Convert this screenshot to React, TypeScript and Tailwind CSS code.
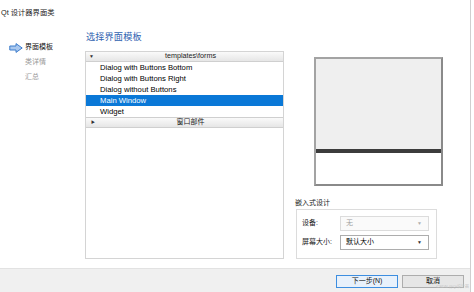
import React from "react";

const FONT = { fontFamily: '"Liberation Sans", "Noto Sans CJK SC", sans-serif' };

function NavArrow() {
  return (
    <svg width="14" height="10" viewBox="0 0 14 10">
      <path d="M0.8 3 H7 V0.6 L13.2 5 L7 9.4 V7 H0.8 Z" fill="#a9c8ef" stroke="#3d7ccc" strokeWidth="1" strokeLinejoin="round" />
    </svg>
  );
}

function Combo({ text, disabled }: { text: string; disabled?: boolean }) {
  return (
    <div
      className={
        "w-[89px] h-[15px] box-border border flex items-center justify-between pl-[5px] pr-[6px] text-[7px] " +
        (disabled ? "border-[#dcdcdc] bg-[#fafafa] text-[#a0a0a0]" : "border-[#adadad] bg-white text-black")
      }
    >
      <span>{text}</span>
      <span className={"text-[5px] " + (disabled ? "text-[#b0b0b0]" : "text-[#333]")}>▼</span>
    </div>
  );
}

export default function App() {
  const items = ["Dialog with Buttons Bottom", "Dialog with Buttons Right", "Dialog without Buttons", "Main Window", "Widget"];
  return (
    <div className="w-[474px] h-[292px] bg-white flex relative overflow-hidden text-black" style={FONT}>
      <div className="w-[471px] h-full flex flex-col border-r border-[#cfcfcf] box-border">
        {/* main area */}
        <div className="flex-1 flex flex-col">
          <div className="h-[28px] flex items-center pl-[1px] text-[7.3px] text-[#222] pb-[1px]">Qt 设计器界面类</div>
          <div className="flex-1 flex">
            {/* nav */}
            <div className="w-[85px] pt-[12px] text-[7px]">
              <div className="h-[15px] flex items-center pl-[9px] gap-[2px]">
                <NavArrow />
                <span className="text-[#111]">界面模板</span>
              </div>
              <div className="h-[15px] flex items-center pl-[25px] text-[#9a9a9a]">类详情</div>
              <div className="h-[15px] flex items-center pl-[25px] text-[#9a9a9a]">汇总</div>
            </div>
            {/* tree column */}
            <div className="w-[199px] flex flex-col pt-[3px]">
              <div className="h-[12px] leading-[12px] text-[9.2px] tracking-[0.1px] text-[#2f62b0] pl-[1px]">选择界面模板</div>
              <div className="mt-[8px] h-[208px] box-border border border-[#d4d4d4] bg-white flex flex-col overflow-hidden">
                <div className="h-[10px] box-border border-b border-[#cfcfcf] bg-gradient-to-b from-[#fafafa] to-[#e6e6e6] relative flex items-center justify-center pl-[12px] text-[7.2px] text-[#222]">
                  <span className="absolute left-[3px] top-[1px] text-[5px] text-[#333]">▼</span>
                  templates\forms
                </div>
                {items.map((it) => (
                  <div
                    key={it}
                    className={
                      "h-[11px] flex items-center pl-[14px] text-[7.7px] " +
                      (it === "Main Window" ? "bg-[#0a78d7] text-white" : "text-black")
                    }
                  >
                    {it}
                  </div>
                ))}
                <div className="h-[11px] box-border border-y border-[#cfcfcf] bg-gradient-to-b from-[#fafafa] to-[#e6e6e6] relative flex items-center justify-center pl-[12px] text-[7px] text-[#222]">
                  <span className="absolute left-[5px] top-[2px] text-[4px] text-[#333]">▶</span>
                  窗口部件
                </div>
              </div>
            </div>
            {/* right column */}
            <div className="flex-1 flex flex-col">
              <div className="pt-[29px] pl-[30px]">
                <div className="w-[129px] h-[129px] box-border border-2 border-[#a3a3a3] border-r-[#8a8a8a] border-b-[#8a8a8a] flex flex-col">
                  <div className="h-[90px] bg-[#efefef]"></div>
                  <div className="h-[4px] bg-[#3c3c3c]"></div>
                  <div className="flex-1 bg-white"></div>
                </div>
              </div>
              <div className="mt-[11px] pl-[11px] h-[11px] leading-[11px] text-[7px] text-[#222]">嵌入式设计</div>
              <div className="mt-[1px] ml-[12px] w-[141px] h-[50px] box-border border border-[#dcdcdc] pt-[6px] pl-[5px] flex flex-col gap-[4px] text-[7px] text-[#222]">
                <div className="flex items-center">
                  <span className="w-[38px]">设备:</span>
                  <Combo text="无" disabled />
                </div>
                <div className="flex items-center">
                  <span className="w-[38px]">屏幕大小:</span>
                  <Combo text="默认大小" />
                </div>
              </div>
            </div>
          </div>
        </div>
        {/* bottom bar */}
        <div className="h-[24px] bg-[#f0f0f0] border-t border-[#e2e2e2] box-border flex items-center justify-end gap-[4px] pr-[6px] pt-[1px]">
          <div className="w-[62px] h-[13px] box-border border border-[#3d8ee0] bg-[#e8f1fb] flex items-center justify-center text-[7px] text-[#111]">下一步(N)</div>
          <div className="w-[62px] h-[13px] box-border border border-[#adadad] bg-[#e6e6e6] flex items-center justify-center text-[7px] text-[#111]">取消</div>
        </div>
      </div>
      <div className="absolute right-[5px] bottom-[2px] text-[4px] text-[#c4c4c4]">CSDN @Qt设计器</div>
    </div>
  );
}
